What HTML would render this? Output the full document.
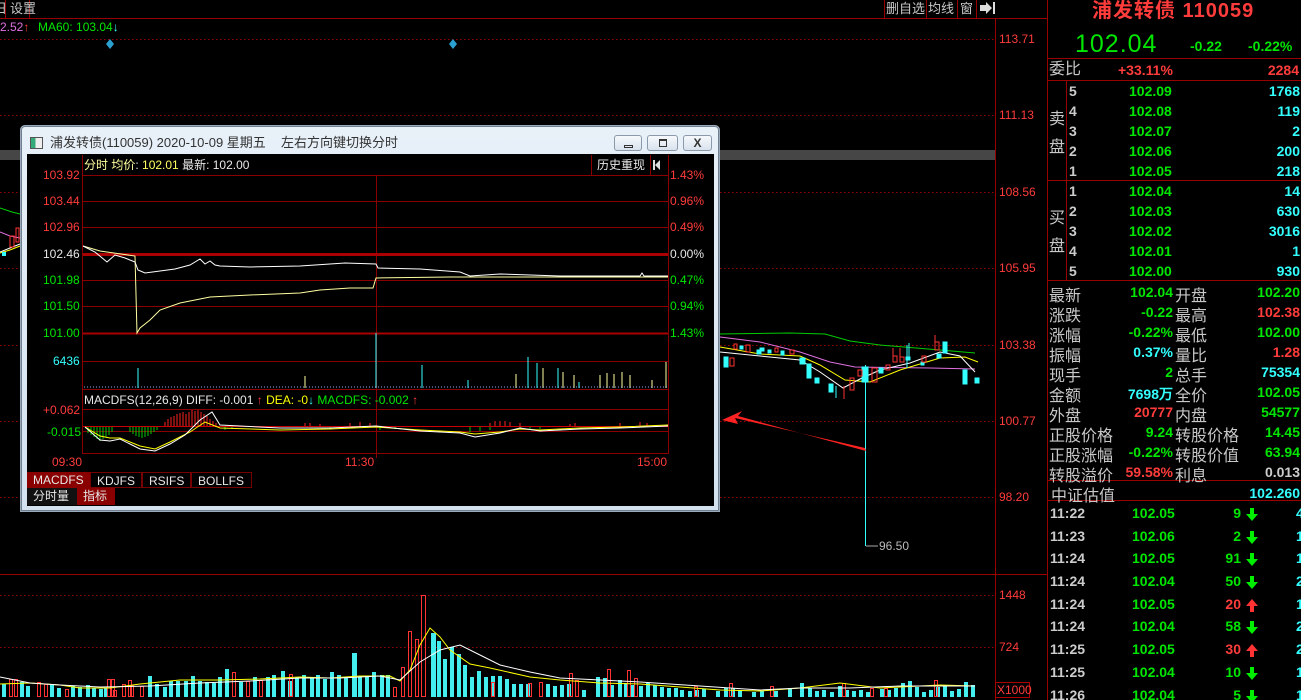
<!DOCTYPE html>
<html><head><meta charset="utf-8">
<style>
*{margin:0;padding:0;box-sizing:border-box}
html,body{width:1301px;height:700px;overflow:hidden}
body{background:#000;position:relative;font-family:"Liberation Sans","Noto Sans CJK SC",sans-serif;}
.t{position:absolute;white-space:nowrap;line-height:1}
.r{color:#ff3c3c}.g{color:#00e600}.c{color:#3ff}.w{color:#e8e8e8}.y{color:#ff0}.gr{color:#c8c8c8}
.rp{font-size:14px;font-weight:bold;font-family:"Liberation Sans",sans-serif}
.lb{font-size:16px;color:#c8c8c8;font-family:"Liberation Sans","Noto Sans CJK SC",sans-serif}
.ar{position:absolute;left:196px;top:3px;width:12px;height:13px}
</style></head><body>
<svg width="1301" height="700" style="position:absolute;left:0;top:0">
<line x1="0" y1="18.5" x2="1047" y2="18.5" stroke="#900" />
<line x1="5.5" y1="0" x2="5.5" y2="18" stroke="#900"/>
<line x1="29.5" y1="0" x2="29.5" y2="18" stroke="#900"/>
<line x1="884.5" y1="0" x2="884.5" y2="18" stroke="#900"/>
<line x1="926.5" y1="0" x2="926.5" y2="18" stroke="#900"/>
<line x1="957.5" y1="0" x2="957.5" y2="18" stroke="#900"/>
<line x1="976.5" y1="0" x2="976.5" y2="18" stroke="#900"/>
<path d="M980 5h6v-3l6 6-6 6v-3h-6z M993 2h2v12h-2z" fill="#ddd"/>
<line x1="995.5" y1="18" x2="995.5" y2="700" stroke="#900"/>
<line x1="1047.5" y1="0" x2="1047.5" y2="700" stroke="#900"/>
<g stroke="#900" stroke-dasharray="1.5 2.5">
<line x1="0" y1="39.5" x2="995" y2="39.5"/><line x1="0" y1="115.5" x2="995" y2="115.5"/>
<line x1="0" y1="192.5" x2="995" y2="192.5"/><line x1="0" y1="268.5" x2="995" y2="268.5"/>
<line x1="0" y1="345.5" x2="995" y2="345.5"/><line x1="0" y1="421.5" x2="995" y2="421.5"/>
<line x1="0" y1="497.5" x2="995" y2="497.5"/>
<line x1="0" y1="595.5" x2="995" y2="595.5"/><line x1="0" y1="647.5" x2="995" y2="647.5"/>
</g>
<rect x="0" y="150" width="995" height="10" fill="#464646"/>
<line x1="0" y1="574.5" x2="1047" y2="574.5" stroke="#900"/>
<path d="M110 39l4 5-4 5-4-5z M453 39l4 5-4 5-4-5z" fill="#29a0d0"/>
<polyline fill="none" stroke="#0c0" points="720,334 790,333 825,334 850,341 880,345 940,350 975,353"/>
<polyline fill="none" stroke="#e070e0" points="720,337 760,342 800,352 830,362 855,367 930,368 975,369"/>
<polyline fill="none" stroke="#ff0" points="720,347 760,354 800,356 820,365 845,380 870,382 900,370 940,358 965,357 978,362"/>
<polyline fill="none" stroke="#fff" points="720,352 760,356 800,360 820,372 843,388 860,379 880,370 910,363 940,352 960,356 975,372"/>
<g fill="#3ff" stroke="#3ff">
<rect x="724" y="357" width="4" height="10"/><rect x="757" y="350" width="4" height="4"/><rect x="760" y="348" width="4" height="3"/><rect x="800" y="358" width="5" height="6"/>
<rect x="807" y="364" width="4" height="14"/><rect x="815" y="378" width="4" height="5"/><rect x="829" y="384" width="4" height="8"/>
<rect x="862" y="367" width="6" height="15"/><rect x="879" y="368" width="4" height="5"/><rect x="906" y="357" width="4" height="3"/><rect x="943" y="342" width="4" height="11"/>
<rect x="937" y="354" width="4" height="4"/><rect x="963" y="370" width="4" height="14"/><rect x="975" y="378" width="4" height="5"/>
<rect x="740" y="346" width="3" height="3"/><rect x="768" y="350" width="3" height="3"/><rect x="781" y="351" width="3" height="4"/><rect x="921" y="362" width="3" height="3"/>
<line x1="865.5" y1="365" x2="865.5" y2="546"/><line x1="836" y1="386" x2="836" y2="398"/><line x1="907" y1="345" x2="907" y2="368"/><line x1="909" y1="343" x2="909" y2="357"/>
</g>
<g fill="none" stroke="#f33">
<rect x="730" y="358" width="4" height="8"/><rect x="746" y="345" width="4" height="7"/><rect x="790" y="350" width="4" height="4"/><rect x="850" y="378" width="4" height="12"/>
<rect x="858" y="370" width="4" height="6"/><rect x="872" y="368" width="5" height="14"/><rect x="886" y="365" width="4" height="5"/><rect x="893" y="356" width="4" height="6"/>
<rect x="900" y="357" width="4" height="5"/><rect x="922" y="356" width="4" height="6"/><rect x="935" y="342" width="4" height="8"/><rect x="734" y="344" width="3" height="5"/><rect x="775" y="348" width="3" height="4"/>
<line x1="844" y1="386" x2="844" y2="399"/><line x1="893" y1="348" x2="893" y2="356"/><line x1="900" y1="348" x2="900" y2="357"/><line x1="935" y1="335" x2="935" y2="342"/>
</g>
<line x1="866" y1="546" x2="878" y2="546" stroke="#aaa"/>
<polygon points="865,448 735,418 738,424 722,420 742,411 738,416 866,451" fill="#f22"/>
<polyline fill="none" stroke="#0c0" points="0,208 12,212 20,214"/>
<polyline fill="none" stroke="#e070e0" points="0,232 10,236 20,238"/>
<polyline fill="none" stroke="#fff" points="0,252 10,248 20,244"/>
<polyline fill="none" stroke="#ff0" points="0,253 10,250 20,246"/>
<rect x="10" y="236" width="4" height="11" fill="none" stroke="#f33"/><rect x="16" y="228" width="3" height="14" fill="none" stroke="#f33"/><rect x="2" y="252" width="4" height="4" fill="#3ff"/>
<path fill="#4ee" d="M2 697V684h4V697z M20 697V682h4V697z M26 697V686h4V697z M50 697V685h4V697z M57 697V688h4V697z M71 697V686h4V697z M78 697V687h4V697z M86 697V685h4V697z M92 697V688h4V697z M99 697V689h4V697z M104 697V688h4V697z M148 697V676h4V697z M155 697V684h4V697z M163 697V687h4V697z M169 697V681h4V697z M176 697V681h4V697z M184 697V681h4V697z M191 697V676h4V697z M198 697V681h4V697z M205 697V682h4V697z M212 697V683h4V697z M218 697V677h4V697z M225 697V669h4V697z M239 697V682h4V697z M253 697V677h4V697z M266 697V677h4V697z M272 697V675h4V697z M281 697V671h4V697z M288 697V681h4V697z M295 697V677h4V697z M302 697V675h4V697z M310 697V677h4V697z M316 697V675h4V697z M323 697V679h4V697z M330 697V672h4V697z M337 697V675h4V697z M344 697V677h4V697z M352 697V653h5V697z M358 697V677h4V697z M365 697V677h4V697z M372 697V672h4V697z M380 697V675h4V697z M386 697V675h4V697z M431 697V633h5V697z M437 697V641h4V697z M443 697V659h4V697z M450 697V647h4V697z M457 697V654h4V697z M463 697V665h4V697z M470 697V677h4V697z M477 697V671h4V697z M484 697V677h4V697z M491 697V676h4V697z M498 697V676h4V697z M505 697V679h4V697z M512 697V684h4V697z M519 697V684h4V697z M526 697V684h4V697z M546 697V684h4V697z M553 697V686h4V697z M560 697V685h4V697z M567 697V684h4V697z M582 697V690h4V697z M596 697V677h4V697z M603 697V678h4V697z M610 697V685h4V697z M618 697V680h4V697z M624 697V683h4V697z M631 697V685h4V697z M639 697V686h4V697z M646 697V683h4V697z M653 697V685h4V697z M660 697V687h4V697z M667 697V688h4V697z M674 697V688h4V697z M680 697V690h4V697z M688 697V691h4V697z M695 697V690h4V697z M702 697V689h4V697z M716 697V691h4V697z M724 697V688h4V697z M731 697V688h4V697z M738 697V690h4V697z M752 697V692h4V697z M760 697V691h4V697z M774 697V691h4V697z M788 697V688h4V697z M800 697V683h4V697z M808 697V688h4V697z M815 697V691h4V697z M822 697V690h4V697z M830 697V692h4V697z M838 697V686h4V697z M845 697V690h4V697z M852 697V691h4V697z M859 697V690h4V697z M866 697V692h4V697z M880 697V689h4V697z M887 697V690h4V697z M894 697V688h4V697z M901 697V683h4V697z M908 697V681h4V697z M915 697V687h4V697z M922 697V692h4V697z M929 697V690h4V697z M936 697V687h4V697z M943 697V685h4V697z M950 697V691h4V697z M957 697V689h4V697z M964 697V682h4V697z M971 697V685h4V697z"/>
<g fill="none" stroke="#f33">
<rect x="9.5" y="679.5" width="3" height="17"/><rect x="14.5" y="679.5" width="3" height="17"/><rect x="37.5" y="682.5" width="3" height="14"/><rect x="44.5" y="684.5" width="3" height="12"/><rect x="65.5" y="689.5" width="3" height="7"/><rect x="113.5" y="690.5" width="3" height="6"/><rect x="122.5" y="684.5" width="3" height="12"/><rect x="130.5" y="685.5" width="3" height="11"/><rect x="140.5" y="686.5" width="3" height="10"/><rect x="107.5" y="679.5" width="3" height="17"/><rect x="111.5" y="679.5" width="3" height="17"/><rect x="128.5" y="680.5" width="3" height="16"/><rect x="232.5" y="672.5" width="3" height="24"/><rect x="246.5" y="681.5" width="3" height="15"/><rect x="259.5" y="680.5" width="3" height="16"/><rect x="289.5" y="674.5" width="3" height="22"/><rect x="393.5" y="687.5" width="3" height="9"/><rect x="401.5" y="667.5" width="3" height="29"/><rect x="408.5" y="631.5" width="3" height="65"/><rect x="415.5" y="639.5" width="3" height="57"/><rect x="421.5" y="595.5" width="4" height="101"/><rect x="491.5" y="682.5" width="3" height="14"/><rect x="528.5" y="683.5" width="3" height="13"/><rect x="539.5" y="682.5" width="3" height="14"/><rect x="569.5" y="673.5" width="3" height="23"/><rect x="575.5" y="680.5" width="3" height="16"/><rect x="607.5" y="669.5" width="3" height="27"/><rect x="627.5" y="670.5" width="3" height="26"/><rect x="634.5" y="678.5" width="3" height="18"/><rect x="694.5" y="686.5" width="3" height="10"/><rect x="729.5" y="683.5" width="3" height="13"/><rect x="770.5" y="686.5" width="3" height="10"/><rect x="842.5" y="683.5" width="3" height="13"/><rect x="870.5" y="688.5" width="3" height="8"/><rect x="884.5" y="688.5" width="3" height="8"/><rect x="934.5" y="680.5" width="3" height="16"/>
</g>
<polyline fill="none" stroke="#ff0" points="0,684 30,683 60,685 80,688 110,688 140,684 180,680 220,680 260,679 300,677 330,678 360,676 390,676 400,681 410,670 420,645 430,628 440,637 450,650 470,664 490,668 530,677 560,680 600,683 640,684 680,687 720,690 760,691 800,688 840,683 880,688 900,687 940,685 975,686"/>
<polyline fill="none" stroke="#fff" points="0,677 30,683 60,685 100,687 150,686 200,683 250,681 300,678 340,678 380,676 400,680 420,662 440,650 460,645 480,655 500,665 530,672 560,678 600,680 640,682 700,686 760,690 800,688 850,688 900,686 975,686"/>
<rect x="995.5" y="682.5" width="34" height="15" fill="none" stroke="#a00"/>
<g stroke="#900">
<line x1="1048" y1="58.5" x2="1301" y2="58.5"/><line x1="1048" y1="80.5" x2="1301" y2="80.5"/>
<line x1="1048" y1="180.5" x2="1301" y2="180.5"/><line x1="1048" y1="280.5" x2="1301" y2="280.5"/>
<line x1="1066.5" y1="80" x2="1066.5" y2="280"/>
<line x1="1048" y1="480.5" x2="1301" y2="480.5"/><line x1="1048" y1="500.5" x2="1301" y2="500.5"/>
</g>
</svg>

<div class="t gr" style="left:-6px;top:2px;font-size:13px">日</div>
<div class="t gr" style="left:10px;top:2px;font-size:13px">设置</div>
<div class="t gr" style="left:886px;top:2px;font-size:13px">删自选</div>
<div class="t gr" style="left:928px;top:2px;font-size:13px">均线</div>
<div class="t gr" style="left:960px;top:2px;font-size:13px">窗</div>
<div class="t" style="left:0;top:21px;font-size:12px;color:#e070e0">2.52<span class="r">↑</span></div>
<div class="t g" style="left:38px;top:21px;font-size:12px">MA60: 103.04<span class="c">↓</span></div>
<div class="t r" style="left:999px;top:33px;font-size:12px">113.71</div>
<div class="t r" style="left:999px;top:109px;font-size:12px">111.13</div>
<div class="t r" style="left:999px;top:186px;font-size:12px">108.56</div>
<div class="t r" style="left:999px;top:262px;font-size:12px">105.95</div>
<div class="t r" style="left:999px;top:339px;font-size:12px">103.38</div>
<div class="t r" style="left:999px;top:415px;font-size:12px">100.77</div>
<div class="t r" style="left:999px;top:491px;font-size:12px">98.20</div>
<div class="t" style="left:879px;top:540px;font-size:12px;color:#bbb">96.50</div>
<div class="t r" style="left:999px;top:589px;font-size:12px">1448</div>
<div class="t r" style="left:999px;top:641px;font-size:12px">724</div>
<div class="t r" style="left:997px;top:684px;font-size:12px">X1000</div>

<div style="position:absolute;left:20px;top:125px;width:700px;height:387px;background:linear-gradient(#e8f0f8,#d4e2f0);border:1px solid #9ab;border-radius:5px 5px 0 0;box-shadow:0 0 0 1px #708090 inset"></div>
<div class="t" style="left:30px;top:137px;width:13px;height:12px;background:linear-gradient(90deg,#3a7 40%,#eee 40%);border:1px solid #555"></div>
<div class="t" style="left:50px;top:136px;font-size:13px;color:#333">浦发转债(110059) 2020-10-09 星期五</div>
<div class="t" style="left:281px;top:136px;font-size:13px;color:#333">左右方向键切换分时</div>
<div class="t" style="left:614px;top:135px;width:28px;height:16px;border:1px solid #8a9aab;border-radius:3px;background:linear-gradient(#f6f9fc,#d8e2ee)"><div style="position:absolute;left:9px;top:9px;width:9px;height:3px;border:1px solid #333"></div></div>
<div class="t" style="left:647px;top:135px;width:31px;height:16px;border:1px solid #8a9aab;border-radius:3px;background:linear-gradient(#f6f9fc,#d8e2ee)"><div style="position:absolute;left:11px;top:3px;width:8px;height:8px;border:1px solid #333;border-top-width:2px"></div></div>
<div class="t" style="left:683px;top:135px;width:29px;height:16px;border:1px solid #8a9aab;border-radius:3px;background:linear-gradient(#f6f9fc,#d8e2ee);font-size:12px;text-align:center;line-height:14px;color:#333;font-weight:bold">X</div>
<div style="position:absolute;left:27px;top:154px;width:687px;height:352px;background:#000"></div>
<svg width="700" height="360" style="position:absolute;left:20px;top:150px">
<g transform="translate(-20,-150)">
<g stroke="#8a0000">
<line x1="83" y1="175.5" x2="668" y2="175.5"/><line x1="83" y1="201.5" x2="668" y2="201.5"/><line x1="83" y1="227.5" x2="668" y2="227.5"/>
<line x1="83" y1="280.5" x2="668" y2="280.5"/><line x1="83" y1="306.5" x2="668" y2="306.5"/><line x1="83" y1="361.5" x2="668" y2="361.5"/>
<line x1="83" y1="389.5" x2="668" y2="389.5"/><line x1="83" y1="409.5" x2="668" y2="409.5"/><line x1="83" y1="431.5" x2="668" y2="431.5"/><line x1="83" y1="453.5" x2="668" y2="453.5"/>
<line x1="82.5" y1="155" x2="82.5" y2="454"/><line x1="668.5" y1="155" x2="668.5" y2="454"/><line x1="376.5" y1="175" x2="376.5" y2="458"/>
<line x1="591.5" y1="155" x2="591.5" y2="175"/><line x1="650.5" y1="155" x2="650.5" y2="175"/>
</g>
<line x1="83" y1="254.5" x2="668" y2="254.5" stroke="#a00" stroke-width="3"/>
<line x1="83" y1="333.5" x2="668" y2="333.5" stroke="#a00" stroke-width="2"/>
<line x1="83" y1="426.5" x2="668" y2="426.5" stroke="#c00"/>
<path d="M655 165l5-5v10z M653 160h2v10h-2z" fill="#ddd"/>
<polyline fill="none" stroke="#ffffa0" points="83,246 100,251 135,256 137,333 140,328 150,320 160,310 180,303 210,297 250,295 300,293 320,290 350,288 373,288 376,278 450,277 668,277"/>
<polyline fill="none" stroke="#fff" points="83,246 95,252 107,262 115,255 125,258 135,262 138,270 145,273 160,271 175,269 190,265 200,259 205,264 210,261 215,265 220,266 250,267 300,266 345,263 376,264 378,268 420,269 460,272 470,276 500,274 560,276 640,276 642,273 644,276 668,276"/>
<g stroke="#3ff"><line x1="376" y1="333" x2="376" y2="388"/><line x1="138" y1="368" x2="138" y2="388"/><line x1="422" y1="365" x2="422" y2="388"/><line x1="528" y1="357" x2="528" y2="388"/><line x1="558" y1="368" x2="558" y2="388"/><line x1="537" y1="363" x2="537" y2="388"/><line x1="468" y1="380" x2="468" y2="388"/><line x1="579" y1="382" x2="579" y2="388"/></g>
<g stroke="#ffffa0"><line x1="305" y1="376" x2="305" y2="388"/><line x1="516" y1="374" x2="516" y2="388"/><line x1="563" y1="372" x2="563" y2="388"/><line x1="614" y1="374" x2="614" y2="388"/><line x1="622" y1="372" x2="622" y2="388"/><line x1="600" y1="375" x2="600" y2="388"/><line x1="666" y1="362" x2="666" y2="388"/><line x1="543" y1="368" x2="543" y2="388"/><line x1="574" y1="375" x2="574" y2="388"/><line x1="607" y1="373" x2="607" y2="388"/><line x1="630" y1="375" x2="630" y2="388"/><line x1="652" y1="380" x2="652" y2="388"/></g>
<line x1="84" y1="387" x2="668" y2="387" stroke="#8ae" stroke-dasharray="1 2"/>
<g stroke="#0c0"><path d="M88 427v6M91 427v8M94 427v10M97 427v12M100 427v14M103 427v12M106 427v10M109 427v8M112 427v5M130 427v5M133 427v7M136 427v9M139 427v10M142 427v11M145 427v10M148 427v9M151 427v7M154 427v5M157 427v3M225 427v3M232 427v2M330 427v2M380 427v3M395 427v2M470 427v5M480 427v4M490 427v3M520 427v2M530 427v3M540 427v2"/></g>
<g stroke="#f22"><path d="M165 426v-4M168 426v-7M171 426v-9M174 426v-10M177 426v-12M180 426v-13M183 426v-14M186 426v-12M189 426v-14M192 426v-16M195 426v-15M198 426v-16M201 426v-14M204 426v-12M207 426v-10M210 426v-7M213 426v-5M216 426v-3M305 426v-3M310 426v-3M320 426v-2M350 426v-3M360 426v-4M370 426v-3M490 426v-3M495 426v-5M500 426v-5M505 426v-5M510 426v-4M520 426v-3M570 426v-2M575 426v-3M620 426v-3M640 426v-4M647 426v-3"/></g>
<polyline fill="none" stroke="#ff0" points="85,427 100,436 110,438 120,438 130,442 140,446 155,449 170,442 190,432 205,422 220,428 280,430 330,429 376,427 420,430 460,432 475,434 500,432 520,429 540,430 580,428 620,427 668,425"/>
<polyline fill="none" stroke="#fff" points="85,427 100,440 110,441 120,439 130,444 140,449 155,451 170,444 185,435 200,420 212,412 220,425 280,428 330,428 376,426 420,431 460,433 475,437 500,433 520,428 540,431 580,429 620,428 668,426"/>
</g></svg>
<div class="t" style="left:84px;top:159px;font-size:12px;color:#ffffa0">分时 均价<span class="w">: </span><span style="color:#ffff60">102.01</span> <span class="w">最新: 102.00</span></div>
<div class="t w" style="left:597px;top:159px;font-size:12px">历史重现</div>
<div class="t r" style="left:43px;top:169px;font-size:12px">103.92</div>
<div class="t r" style="left:43px;top:195px;font-size:12px">103.44</div>
<div class="t r" style="left:43px;top:221px;font-size:12px">102.96</div>
<div class="t w" style="left:43px;top:248px;font-size:12px">102.46</div>
<div class="t g" style="left:43px;top:274px;font-size:12px">101.98</div>
<div class="t g" style="left:43px;top:300px;font-size:12px">101.50</div>
<div class="t g" style="left:43px;top:327px;font-size:12px">101.00</div>
<div class="t c" style="left:53px;top:355px;font-size:12px">6436</div>
<div class="t r" style="left:670px;top:169px;font-size:12px">1.43%</div>
<div class="t r" style="left:670px;top:195px;font-size:12px">0.96%</div>
<div class="t r" style="left:670px;top:221px;font-size:12px">0.49%</div>
<div class="t w" style="left:670px;top:248px;font-size:12px">0.00%</div>
<div class="t g" style="left:670px;top:274px;font-size:12px">0.47%</div>
<div class="t g" style="left:670px;top:300px;font-size:12px">0.94%</div>
<div class="t g" style="left:670px;top:327px;font-size:12px">1.43%</div>
<div class="t w" style="left:84px;top:394px;font-size:12px">MACDFS(12,26,9) DIFF: -0.001 <span class="r">↑</span> <span class="y">DEA: -0</span><span class="c">↓</span> <span class="g">MACDFS: -0.002</span> <span class="r">↑</span></div>
<div class="t r" style="left:43px;top:404px;font-size:12px">+0.062</div>
<div class="t g" style="left:47px;top:426px;font-size:12px">-0.015</div>
<div class="t r" style="left:52px;top:456px;font-size:12px">09:30</div>
<div class="t r" style="left:345px;top:456px;font-size:12px">11:30</div>
<div class="t r" style="left:637px;top:456px;font-size:12px">15:00</div>
<div class="t w" style="left:27px;top:472px;width:63px;height:16px;background:#8a0000;font-size:12px;padding:2px 0 0 6px">MACDFS</div>
<div class="t w" style="left:90px;top:472px;width:52px;height:16px;border:1px solid #700;font-size:12px;padding:2px 0 0 6px">KDJFS</div>
<div class="t w" style="left:142px;top:472px;width:49px;height:16px;border:1px solid #700;font-size:12px;padding:2px 0 0 6px">RSIFS</div>
<div class="t w" style="left:191px;top:472px;width:61px;height:16px;border:1px solid #700;font-size:12px;padding:2px 0 0 6px">BOLLFS</div>
<div class="t w" style="left:27px;top:488px;width:50px;height:17px;background:#111;font-size:12px;padding:2px 0 0 6px">分时量</div>
<div class="t w" style="left:77px;top:488px;width:38px;height:17px;background:#8a0000;font-size:12px;padding:2px 0 0 6px">指标</div>

<div class="t r" style="left:1092px;top:1px;font-size:20px;font-weight:bold;letter-spacing:1px">浦发转债 110059</div>
<div class="t g" style="left:1075px;top:32px;font-size:25px;letter-spacing:1px">102.04</div>
<div class="t g rp" style="left:1190px;top:39px">-0.22</div>
<div class="t g rp" style="left:1248px;top:39px">-0.22%</div>
<div class="t lb" style="left:1049px;top:62px">委比</div>
<div class="t r rp" style="left:1118px;top:63px">+33.11%</div>
<div class="t r rp" style="right:2px;top:63px">2284</div>
<div class="t lb" style="left:1049px;top:106px;line-height:28px;width:17px">卖<br>盘</div>
<div class="t lb" style="left:1049px;top:205px;line-height:28px;width:17px">买<br>盘</div>
<div style="position:absolute;left:1069px;top:83px;width:232px">
<div class="rp" style="position:relative;height:20px;color:#ccc">5<span class="g" style="position:absolute;left:60px">102.09</span><span class="c" style="position:absolute;right:1px">1768</span></div>
<div class="rp" style="position:relative;height:20px;color:#ccc">4<span class="g" style="position:absolute;left:60px">102.08</span><span class="c" style="position:absolute;right:1px">119</span></div>
<div class="rp" style="position:relative;height:20px;color:#ccc">3<span class="g" style="position:absolute;left:60px">102.07</span><span class="c" style="position:absolute;right:1px">2</span></div>
<div class="rp" style="position:relative;height:20px;color:#ccc">2<span class="g" style="position:absolute;left:60px">102.06</span><span class="c" style="position:absolute;right:1px">200</span></div>
<div class="rp" style="position:relative;height:20px;color:#ccc">1<span class="g" style="position:absolute;left:60px">102.05</span><span class="c" style="position:absolute;right:1px">218</span></div>
<div class="rp" style="position:relative;height:20px;color:#ccc">1<span class="g" style="position:absolute;left:60px">102.04</span><span class="c" style="position:absolute;right:1px">14</span></div>
<div class="rp" style="position:relative;height:20px;color:#ccc">2<span class="g" style="position:absolute;left:60px">102.03</span><span class="c" style="position:absolute;right:1px">630</span></div>
<div class="rp" style="position:relative;height:20px;color:#ccc">3<span class="g" style="position:absolute;left:60px">102.02</span><span class="c" style="position:absolute;right:1px">3016</span></div>
<div class="rp" style="position:relative;height:20px;color:#ccc">4<span class="g" style="position:absolute;left:60px">102.01</span><span class="c" style="position:absolute;right:1px">1</span></div>
<div class="rp" style="position:relative;height:20px;color:#ccc">5<span class="g" style="position:absolute;left:60px">102.00</span><span class="c" style="position:absolute;right:1px">930</span></div>
</div>
<div style="position:absolute;left:1049px;top:282px;width:252px">
<div style="position:relative;height:20px"><span class="lb">最新</span><span class="rp g" style="position:absolute;right:128px;top:2px">102.04</span><span class="lb" style="position:absolute;left:126px">开盘</span><span class="rp g" style="position:absolute;right:1px;top:2px">102.20</span></div>
<div style="position:relative;height:20px"><span class="lb">涨跌</span><span class="rp g" style="position:absolute;right:128px;top:2px">-0.22</span><span class="lb" style="position:absolute;left:126px">最高</span><span class="rp r" style="position:absolute;right:1px;top:2px">102.38</span></div>
<div style="position:relative;height:20px"><span class="lb">涨幅</span><span class="rp g" style="position:absolute;right:128px;top:2px">-0.22%</span><span class="lb" style="position:absolute;left:126px">最低</span><span class="rp g" style="position:absolute;right:1px;top:2px">102.00</span></div>
<div style="position:relative;height:20px"><span class="lb">振幅</span><span class="rp c" style="position:absolute;right:128px;top:2px">0.37%</span><span class="lb" style="position:absolute;left:126px">量比</span><span class="rp r" style="position:absolute;right:1px;top:2px">1.28</span></div>
<div style="position:relative;height:20px"><span class="lb">现手</span><span class="rp g" style="position:absolute;right:128px;top:2px">2</span><span class="lb" style="position:absolute;left:126px">总手</span><span class="rp c" style="position:absolute;right:1px;top:2px">75354</span></div>
<div style="position:relative;height:20px"><span class="lb">金额</span><span class="rp c" style="position:absolute;right:128px;top:2px">7698万</span><span class="lb" style="position:absolute;left:126px">全价</span><span class="rp g" style="position:absolute;right:1px;top:2px">102.05</span></div>
<div style="position:relative;height:20px"><span class="lb">外盘</span><span class="rp r" style="position:absolute;right:128px;top:2px">20777</span><span class="lb" style="position:absolute;left:126px">内盘</span><span class="rp g" style="position:absolute;right:1px;top:2px">54577</span></div>
<div style="position:relative;height:20px"><span class="lb">正股价格</span><span class="rp g" style="position:absolute;right:128px;top:2px">9.24</span><span class="lb" style="position:absolute;left:126px">转股价格</span><span class="rp g" style="position:absolute;right:1px;top:2px">14.45</span></div>
<div style="position:relative;height:20px"><span class="lb">正股涨幅</span><span class="rp g" style="position:absolute;right:128px;top:2px">-0.22%</span><span class="lb" style="position:absolute;left:126px">转股价值</span><span class="rp g" style="position:absolute;right:1px;top:2px">63.94</span></div>
<div style="position:relative;height:20px"><span class="lb">转股溢价</span><span class="rp r" style="position:absolute;right:128px;top:2px">59.58%</span><span class="lb" style="position:absolute;left:126px">利息</span><span class="rp" style="position:absolute;right:1px;top:2px;color:#ccc">0.013</span></div>
<div style="position:relative;height:20px;margin-top:0"><span class="lb" style="padding-left:2px">中证估值</span><span class="rp c" style="position:absolute;right:1px;top:3px">102.260</span></div>
</div>
<div style="position:absolute;left:1050px;top:505px;width:251px;font-size:14px;font-weight:bold">
<div style="position:relative;height:22.7px;color:#ccc">11:22<span class="g" style="position:absolute;left:82px">102.05</span><span class="g" style="position:absolute;right:60px">9</span><svg class="ar" viewBox="0 0 12 13"><path d="M4 0h4v6h4l-6 7-6-7h4z" fill="#0e0"/></svg><span class="c" style="position:absolute;left:246px">4</span></div>
<div style="position:relative;height:22.7px;color:#ccc">11:23<span class="g" style="position:absolute;left:82px">102.06</span><span class="g" style="position:absolute;right:60px">2</span><svg class="ar" viewBox="0 0 12 13"><path d="M4 0h4v6h4l-6 7-6-7h4z" fill="#0e0"/></svg><span class="c" style="position:absolute;left:246px">1</span></div>
<div style="position:relative;height:22.7px;color:#ccc">11:24<span class="g" style="position:absolute;left:82px">102.05</span><span class="g" style="position:absolute;right:60px">91</span><svg class="ar" viewBox="0 0 12 13"><path d="M4 0h4v6h4l-6 7-6-7h4z" fill="#0e0"/></svg><span class="c" style="position:absolute;left:246px">1</span></div>
<div style="position:relative;height:22.7px;color:#ccc">11:24<span class="g" style="position:absolute;left:82px">102.04</span><span class="g" style="position:absolute;right:60px">50</span><svg class="ar" viewBox="0 0 12 13"><path d="M4 0h4v6h4l-6 7-6-7h4z" fill="#0e0"/></svg><span class="c" style="position:absolute;left:246px">2</span></div>
<div style="position:relative;height:22.7px;color:#ccc">11:24<span class="g" style="position:absolute;left:82px">102.05</span><span class="r" style="position:absolute;right:60px">20</span><svg class="ar" viewBox="0 0 12 13"><path d="M4 13h4v-6h4l-6-7-6 7h4z" fill="#f33"/></svg><span class="c" style="position:absolute;left:246px">1</span></div>
<div style="position:relative;height:22.7px;color:#ccc">11:24<span class="g" style="position:absolute;left:82px">102.04</span><span class="g" style="position:absolute;right:60px">58</span><svg class="ar" viewBox="0 0 12 13"><path d="M4 0h4v6h4l-6 7-6-7h4z" fill="#0e0"/></svg><span class="c" style="position:absolute;left:246px">2</span></div>
<div style="position:relative;height:22.7px;color:#ccc">11:25<span class="g" style="position:absolute;left:82px">102.05</span><span class="r" style="position:absolute;right:60px">30</span><svg class="ar" viewBox="0 0 12 13"><path d="M4 13h4v-6h4l-6-7-6 7h4z" fill="#f33"/></svg><span class="c" style="position:absolute;left:246px">2</span></div>
<div style="position:relative;height:22.7px;color:#ccc">11:25<span class="g" style="position:absolute;left:82px">102.04</span><span class="g" style="position:absolute;right:60px">10</span><svg class="ar" viewBox="0 0 12 13"><path d="M4 0h4v6h4l-6 7-6-7h4z" fill="#0e0"/></svg><span class="c" style="position:absolute;left:246px">1</span></div>
<div style="position:relative;height:22.7px;color:#ccc">11:26<span class="g" style="position:absolute;left:82px">102.04</span><span class="g" style="position:absolute;right:60px">5</span><svg class="ar" viewBox="0 0 12 13"><path d="M4 0h4v6h4l-6 7-6-7h4z" fill="#0e0"/></svg><span class="c" style="position:absolute;left:246px">1</span></div>
</div>
</body></html>
